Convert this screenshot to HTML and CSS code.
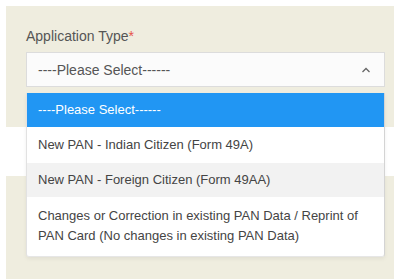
FILE: index.html
```html
<!DOCTYPE html>
<html>
<head>
<meta charset="utf-8">
<link rel="stylesheet" href="styles.css">
</head>
<body>
<div class="page">
  <section class="panel panel-top">
    <label class="label">Application Type<span class="req">*</span></label>
    <div class="select">
      <span class="select-text">----Please Select------</span>
      <svg class="chev" width="10" height="6" viewBox="0 0 10 6"><polyline points="1.5,5 5,1.5 8.5,5" fill="none" stroke="#666" stroke-width="1.3"/></svg>
    </div>
  </section>
  <div class="gap"></div>
  <section class="panel panel-bottom"></section>
  <ul class="dropdown">
    <li class="opt active">----Please Select------</li>
    <li class="opt">New PAN - Indian Citizen (Form 49A)</li>
    <li class="opt hover">New PAN - Foreign Citizen (Form 49AA)</li>
    <li class="opt last">Changes or Correction in existing PAN Data / Reprint of PAN Card (No changes in existing PAN Data)</li>
  </ul>
</div>
</body>
</html>
```

FILE: styles.css
```css
html, body {
  margin: 0;
  padding: 0;
  background: #ffffff;
  font-family: "Liberation Sans", Arial, sans-serif;
}
.page {
  position: relative;
  width: 394px;
  height: 279px;
  overflow: hidden;
}
.panel {
  background: #efeddf;
  margin-left: 6px;
}
.panel-top {
  margin-top: 6px;
  height: 121px;
  box-sizing: border-box;
  padding: 21px 9px 0 20px;
}
.label {
  display: block;
  font-size: 14px;
  color: #555555;
  line-height: 18px;
  margin-bottom: 7px;
}
.req {
  color: #e5534b;
}
.select {
  height: 35px;
  box-sizing: border-box;
  border: 1px solid #dcdcdc;
  background: #fbfbfb;
  display: flex;
  align-items: center;
  justify-content: space-between;
  padding: 0 12px 0 11px;
}
.select-text {
  font-size: 14px;
  color: #555555;
}
.chev {
  margin-right: 1px;
}
.gap {
  height: 49px;
}
.panel-bottom {
  height: 110px;
}
.dropdown {
  position: absolute;
  left: 26px;
  top: 93px;
  width: 359px;
  margin: 0;
  padding: 0;
  list-style: none;
  background: #ffffff;
  border-right: 1px solid #d4d4d4;
  border-left: 1px solid #e2e2e2;
  border-bottom: 1px solid #e6e6e6;
  box-sizing: border-box;
  border-radius: 0 0 3px 3px;
  box-shadow: 0 2px 4px rgba(0,0,0,0.06);
}
.opt {
  padding: 8px 12px 8px 11px;
  font-size: 13px;
  line-height: 20px;
  color: #444444;
}
.opt.active {
  padding-top: 7px;
  padding-bottom: 7px;
  background: #2196f3;
  color: #ffffff;
}
.opt.hover {
  padding-top: 7px;
  padding-bottom: 7px;
  background: #f2f2f2;
}
.opt.last {
  padding-top: 9px;
  padding-bottom: 10px;
}
```
